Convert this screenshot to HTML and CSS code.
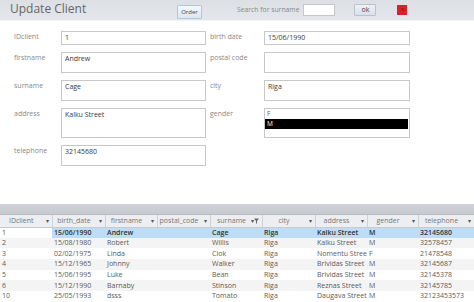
FILE: index.html
```html
<!DOCTYPE html>
<html>
<head>
<meta charset="utf-8">
<link rel="stylesheet" href="styles.css">
</head>
<body>
<div class="app">
  <header class="topbar">
    <h1 class="title">Update Client</h1>
    <button class="btn order">Order</button>
    <span class="search-label">Search for surname</span>
    <span class="search-input"></span>
    <button class="btn ok">ok</button>
    <span class="close">x</span>
  </header>

  <section class="form">
    <label class="lbl">IDclient</label>
    <div class="field h13">1</div>
    <label class="lbl lbl2">birth date</label>
    <div class="field h13">15/06/1990</div>

    <label class="lbl">firstname</label>
    <div class="field h21">Andrew</div>
    <label class="lbl lbl2">postal code</label>
    <div class="field h21"></div>

    <label class="lbl">surname</label>
    <div class="field h21">Cage</div>
    <label class="lbl lbl2">city</label>
    <div class="field h21">Riga</div>

    <label class="lbl">address</label>
    <div class="field h29">Kalku Street</div>
    <label class="lbl lbl2">gender</label>
    <div class="field h29 listbox">
      <div class="opt">F</div>
      <div class="opt sel">M</div>
    </div>

    <label class="lbl">telephone</label>
    <div class="field h21">32145680</div>
  </section>

  <div class="band"></div>

  <table class="grid">
    <colgroup>
      <col style="width:52px"><col style="width:53px"><col style="width:52px"><col style="width:53px"><col style="width:52px"><col style="width:53px"><col style="width:52px"><col style="width:51px"><col style="width:56px">
    </colgroup>
    <thead>
      <tr>
        <th><span>IDclient</span><i class="arr">▾</i></th>
        <th><span>birth_date</span><i class="arr">▾</i></th>
        <th><span>firstname</span><i class="arr">▾</i></th>
        <th><span>postal_code</span><i class="arr">▾</i></th>
        <th><span>surname</span><i class="arr filt">▾<svg width="5" height="6" viewBox="0 0 5 6"><path d="M0 0.5h5L3 3v3L2 5V3z" fill="#666"/></svg></i></th>
        <th><span>city</span><i class="arr">▾</i></th>
        <th><span>address</span><i class="arr">▾</i></th>
        <th><span>gender</span><i class="arr">▾</i></th>
        <th><span>telephone</span><i class="arr">▾</i></th>
      </tr>
    </thead>
    <tbody>
      <tr class="cur"><td class="idc">1</td><td>15/06/1990</td><td>Andrew</td><td></td><td>Cage</td><td>Riga</td><td>Kalku Street</td><td>M</td><td>32145680</td></tr>
      <tr class="alt"><td>2</td><td>15/08/1980</td><td>Robert</td><td></td><td>Willis</td><td>Riga</td><td>Kalku Street</td><td>M</td><td>32578457</td></tr>
      <tr><td>3</td><td>02/02/1975</td><td>Linda</td><td></td><td>Ciok</td><td>Riga</td><td class="clip">Nomentu Stree</td><td>F</td><td>21478548</td></tr>
      <tr class="alt"><td>4</td><td>15/12/1965</td><td>Johnny</td><td></td><td>Walker</td><td>Riga</td><td>Brividas Street</td><td>M</td><td>32145687</td></tr>
      <tr><td>5</td><td>15/06/1995</td><td>Luke</td><td></td><td>Bean</td><td>Riga</td><td>Brividas Street</td><td>M</td><td>32145378</td></tr>
      <tr class="alt"><td>6</td><td>15/12/1990</td><td>Barnaby</td><td></td><td>Stinson</td><td>Riga</td><td>Reznas Street</td><td>M</td><td>32145785</td></tr>
      <tr><td>10</td><td>25/05/1993</td><td>dsss</td><td></td><td>Tomato</td><td>Riga</td><td>Daugava Street</td><td>M</td><td>32123453573</td></tr>
    </tbody>
  </table>
</div>
</body>
</html>
```

FILE: styles.css
```css
* { box-sizing: border-box; }
html, body { margin: 0; padding: 0; }
body {
  width: 474px;
  height: 302px;
  overflow: hidden;
  background: #fff;
  font-family: "Open Sans", "Noto Sans", sans-serif;
  color: #555;
}
.app { width: 474px; height: 302px; display: flex; flex-direction: column; }

.topbar {
  height: 21px;
  flex: none;
  display: flex;
  align-items: center;
  background: linear-gradient(#dcdfe4, #e3e6ea);
  border-bottom: 1px solid #f3f4f6;
  padding-left: 10px;
}
.title {
  margin: 0;
  width: 167px;
  font-weight: 400;
  font-size: 12px;
  color: #666;
  line-height: 14px;
  margin-top: -2px;
}
.btn {
  font-family: "Open Sans", sans-serif;
  padding: 0;
  color: #444;
  border: 1px solid #b9c3cf;
  border-radius: 1px;
  cursor: default;
}
.order {
  width: 25px;
  height: 14px;
  font-size: 6px;
  background: linear-gradient(#f3f8fd, #dbe7f4);
  border-color: #b4c6dc;
  margin-top: 3px;
}
.search-label {
  margin-left: 35px;
  font-size: 6.8px;
  color: #8a8a8a;
  margin-top: -1px;
}
.search-input {
  margin-left: 4px;
  width: 32px;
  height: 12px;
  background: #fff;
  border: 1px solid #c7c7c7;
  margin-top: -1px;
}
.ok {
  margin-left: 19px;
  width: 22px;
  height: 12px;
  font-size: 7px;
  line-height: 10px;
  background: linear-gradient(#eef2f6, #d8e0e8);
  margin-top: -1px;
}
.close {
  margin-left: 21px;
  width: 10px;
  height: 10px;
  background: #e01d2a;
  color: #7a1016;
  font-size: 6px;
  line-height: 9px;
  text-align: center;
  margin-top: -1px;
}

.form {
  flex: none;
  height: 183px;
  display: grid;
  grid-template-columns: 47px 145px 58px 146px;
  grid-auto-rows: auto;
  row-gap: 7px;
  align-content: start;
  padding: 10px 0 0 14px;
}
.lbl {
  font-size: 7px;
  color: #888;
  line-height: 10px;
  padding-top: 1px;
}
.lbl2 { padding-left: 4px; }
.field {
  border: 1px solid #c8c8c8;
  background: #fff;
  font-size: 7px;
  line-height: 10px;
  color: #3a3a3a;
  padding: 1px 3px;
}
.h13 { height: 14px; }
.h21 { height: 21px; }
.h29 { height: 30px; }
.listbox { padding: 0; }
.opt { height: 10px; line-height: 10px; padding-left: 2px; font-size: 6.5px; color: #666; }
.opt.sel { background: #000; color: #fff; margin-right: 1px; }

.band {
  flex: none;
  height: 11px;
  background: linear-gradient(#cfd2d6, #c6c9ce);
  border-bottom: 1px solid #b9bcc1;
}

.grid {
  table-layout: fixed;
  border-collapse: collapse;
  width: 474px;
  font-size: 7px;
}
.grid th {
  height: 12px;
  padding: 0 3px 0 2px;
  background: #eceef1;
  border-right: 1px solid #cfd1d4;
  border-bottom: 1px solid #c9cbce;
  font-weight: 400;
  color: #777;
  white-space: nowrap;
  overflow: hidden;
}
.grid th span { display: inline-block; width: calc(100% - 8px); text-align: center; line-height: 11px; }
.arr { font-style: normal; font-size: 6px; color: #555; display: inline-block; width: 8px; text-align: right; }
.arr.filt svg { vertical-align: -1px; }
.grid td {
  height: 10.7px;
  padding: 0 0 0 2px;
  line-height: 10px;
  white-space: nowrap;
  overflow: hidden;
  color: #5a5a5a;
}
.grid tr.alt td { background: #f4f4f4; }
.grid tr.cur td { background: #bddcf5; color: #333; font-weight: 600; }
.grid tr.cur td.idc { background: #fff; font-weight: 400; color: #555; }
```
